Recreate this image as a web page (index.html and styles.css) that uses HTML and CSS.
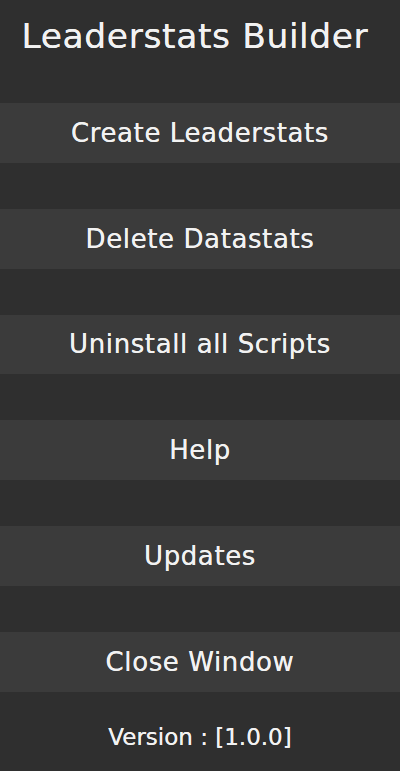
FILE: index.html
```html
<!DOCTYPE html>
<html>
<head>
<meta charset="utf-8">
<link rel="stylesheet" href="styles.css">
</head>
<body>
<div class="panel">
  <h1 class="title">Leaderstats Builder</h1>
  <div class="menu">
    <div class="item">Create Leaderstats</div>
    <div class="item">Delete Datastats</div>
    <div class="item">Uninstall all Scripts</div>
    <div class="item">Help</div>
    <div class="item">Updates</div>
    <div class="item">Close Window</div>
  </div>
  <div class="version">Version : [1.0.0]</div>
</div>
</body>
</html>
```
FILE: styles.css
```css
html, body {
  margin: 0;
  padding: 0;
  background: #2f2f2f;
}
.panel {
  width: 400px;
  height: 771px;
  display: flex;
  flex-direction: column;
  font-family: "DejaVu Sans", sans-serif;
  color: #f2f2f2;
  text-shadow: 0 0 0.6px #f2f2f2;
}
.title {
  margin: 0;
  height: 103px;
  display: flex;
  align-items: center;
  justify-content: center;
  padding-bottom: 32px;
  padding-right: 10px;
  box-sizing: border-box;
  font-size: 34.5px;
  font-weight: normal;
  letter-spacing: 0.6px;
}
.menu {
  display: flex;
  flex-direction: column;
  gap: 46px;
}
.item {
  height: 59.8px;
  background: #3b3b3b;
  display: flex;
  align-items: center;
  justify-content: center;
  font-size: 26px;
  letter-spacing: 0.6px;
}
.version {
  flex: 1;
  display: flex;
  align-items: center;
  justify-content: center;
  padding-top: 12px;
  font-size: 23px;
}
```
